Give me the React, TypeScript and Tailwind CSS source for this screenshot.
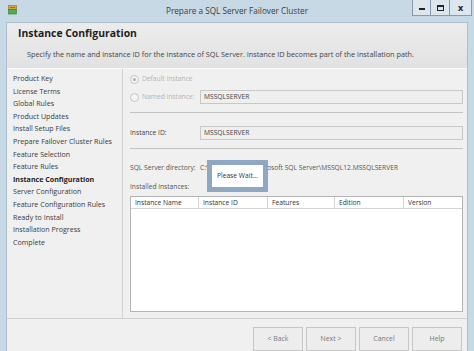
const navItems = [
  "Product Key",
  "License Terms",
  "Global Rules",
  "Product Updates",
  "Install Setup Files",
  "Prepare Failover Cluster Rules",
  "Feature Selection",
  "Feature Rules",
  "Instance Configuration",
  "Server Configuration",
  "Feature Configuration Rules",
  "Ready to Install",
  "Installation Progress",
  "Complete",
];

const columns = [
  { label: "Instance Name", w: "w-[68px]" },
  { label: "Instance ID", w: "w-[69px]" },
  { label: "Features", w: "w-[67px]" },
  { label: "Edition", w: "w-[69px]" },
  { label: "Version", w: "flex-1" },
];

const font = { fontFamily: '"Open Sans", "Noto Sans", sans-serif' };

function Radio({ checked }: { checked?: boolean }) {
  return (
    <span className="flex h-[9px] w-[9px] shrink-0 items-center justify-center rounded-full border border-[#c4c4c4] bg-[#f4f4f4]">
      {checked && <span className="h-[3px] w-[3px] rounded-full bg-[#b0b0b0]" />}
    </span>
  );
}

export default function App() {
  return (
    <div
      className="relative flex h-[351px] w-[474px] flex-col overflow-hidden bg-[#c7d9e5] text-[#333]"
      style={font}
    >
      {/* Title bar */}
      <div className="relative flex h-[22px] shrink-0 items-center justify-center">
        <svg className="absolute left-[8px] top-[5px]" width="9" height="10" viewBox="0 0 9 10">
          <rect x="0.5" y="0.5" width="8" height="4" fill="#d9a441" stroke="#a06a2a" strokeWidth="0.6" />
          <rect x="0.5" y="4.5" width="8" height="4.5" fill="#4caf50" stroke="#2e7d32" strokeWidth="0.6" />
          <rect x="2" y="2" width="5" height="1" fill="#e04a3a" />
        </svg>
        <span className="whitespace-nowrap text-[8.2px] leading-none text-[#3c3c3c]">
          Prepare a SQL Server Failover Cluster
        </span>
        <div className="absolute right-[2px] top-0 flex h-[16px]">
          <div className="flex w-[19px] items-end justify-center border border-t-0 border-[#8a9aa6] bg-[#dbe6ee] pb-[5px]">
            <span className="h-[2px] w-[6px] bg-[#222]" />
          </div>
          <div className="flex w-[19px] items-center justify-center border border-l-0 border-t-0 border-[#8a9aa6] bg-[#dbe6ee]">
            <span className="h-[6px] w-[7px] border-[1.5px] border-t-[2px] border-[#222]" />
          </div>
          <div className="flex w-[22px] items-center justify-center border border-l-0 border-t-0 border-[#8a9aa6] bg-[#dbe6ee] text-[9px] font-bold leading-none text-[#222]">
            x
          </div>
        </div>
      </div>

      {/* Window body */}
      <div className="mx-[6px] flex flex-1 flex-col border border-b-0 border-[#aebfcc] bg-[#f0f0f0]">
        {/* Header */}
        <div className="flex h-[45px] shrink-0 flex-col bg-gradient-to-b from-[#ececec] to-[#e2e2e2] pl-[11px]">
          <div className="mt-[3px] whitespace-nowrap text-[10.4px] font-bold leading-[14px] text-[#1e1e1e]">
            Instance Configuration
          </div>
          <div className="mt-[9px] whitespace-nowrap pl-[9px] text-[7.3px] leading-[10px] text-[#444]">
            Specify the name and instance ID for the instance of SQL Server. Instance ID becomes part of the installation path.
          </div>
        </div>

        {/* Main */}
        <div className="flex flex-1 border-t border-[#fafafa]">
          <div className="flex w-[116px] shrink-0 flex-col border-r border-[#d2d2d2] pl-[6px] pt-[3px]">
            {navItems.map((item) => (
              <div
                key={item}
                className={
                  "h-[12.6px] whitespace-nowrap text-[7.1px] leading-[12.6px] " +
                  (item === "Instance Configuration" ? "font-bold text-[#1e1e1e]" : "text-[#3a3a3a]")
                }
              >
                {item}
              </div>
            ))}
          </div>

          <div className="relative flex flex-1 flex-col whitespace-nowrap pl-[7px] pr-[4px] text-[6.7px] leading-[10px]">
            <div className="mt-[5px] flex items-center gap-[3px] text-[#b4b4b4]">
              <Radio checked />
              <span>Default instance</span>
            </div>
            <div className="mt-[6px] flex items-center">
              <div className="flex w-[70px] items-center gap-[3px] text-[#b4b4b4]">
                <Radio />
                <span>Named instance:</span>
              </div>
              <div className="flex h-[14px] flex-1 items-center border border-[#c8c8c8] bg-[#efefef] pl-[3px] text-[#444]">
                MSSQLSERVER
              </div>
            </div>
            <div className="mt-[8px] h-px bg-[#c2c2c2]" />

            <div className="mt-[13px] flex items-center">
              <span className="w-[70px] text-[#444]">Instance ID:</span>
              <div className="flex h-[14px] flex-1 items-center border border-[#c8c8c8] bg-[#efefef] pl-[3px] text-[#444]">
                MSSQLSERVER
              </div>
            </div>
            <div className="mt-[8px] h-px bg-[#c2c2c2]" />

            <div className="mt-[14px] flex items-center text-[#555]">
              <span className="w-[70px]">SQL Server directory:</span>
              <span>C:\Program Files\Microsoft SQL Server\MSSQL12.MSSQLSERVER</span>
            </div>
            <div className="mt-[9px] text-[#555]">Installed instances:</div>

            <div className="mb-[6px] mt-[4px] flex flex-1 flex-col border border-[#b4b4b4] bg-white">
              <div className="flex h-[12px] border-b border-[#d4d4d4] text-[#333]">
                {columns.map((c, i) => (
                  <div
                    key={c.label}
                    className={
                      c.w +
                      " flex items-center pl-[4px] " +
                      (i < columns.length - 1 ? "border-r border-[#d4d4d4]" : "")
                    }
                  >
                    {c.label}
                  </div>
                ))}
              </div>
            </div>

            {/* Please wait popup */}
            <div className="absolute left-[84px] top-[91px] flex h-[32px] w-[61px] items-center justify-center border-[5px] border-[#8ea8c4] bg-white text-[6.7px] leading-[10px] text-[#333]">
              Please Wait...
            </div>
          </div>
        </div>

        {/* Buttons */}
        <div className="flex h-[33px] shrink-0 items-start justify-end gap-[3px] border-t border-[#d0d0d0] pr-[5px] pt-[8px]">
          {["< Back", "Next >", "Cancel", "Help"].map((b) => (
            <div
              key={b}
              className="flex h-[24px] w-[50px] items-center justify-center border border-[#c6c6c6] bg-[#ededed] text-[6.9px] text-[#777]"
            >
              {b}
            </div>
          ))}
        </div>
      </div>
    </div>
  );
}
